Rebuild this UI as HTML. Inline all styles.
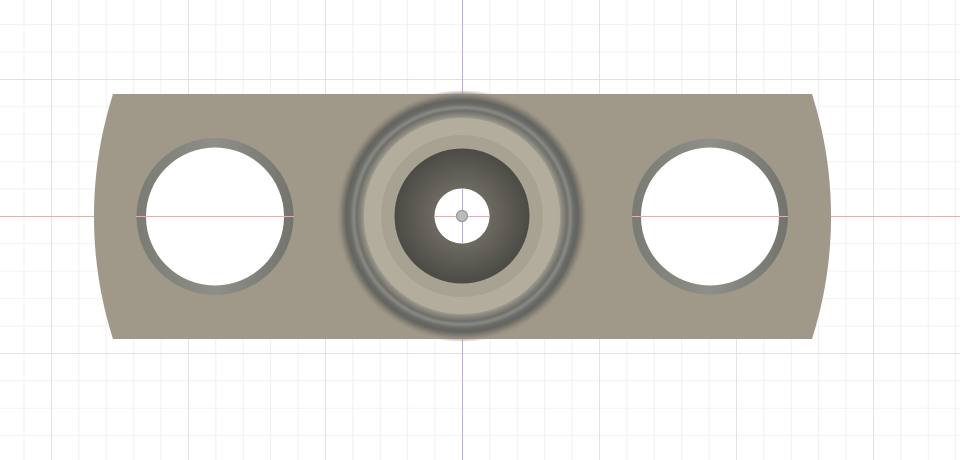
<!DOCTYPE html>
<html><head><meta charset="utf-8"><style>
html,body{margin:0;padding:0;background:#fff;width:960px;height:460px;overflow:hidden}
</style></head><body>
<svg width="960" height="460" viewBox="0 0 960 460" xmlns="http://www.w3.org/2000/svg">
<defs>
<pattern id="minor" patternUnits="userSpaceOnUse" x="23.6" y="24.2" width="27.4" height="27.4">
<path d="M0 0H27.4M0 0V27.4" stroke="#ededf1" stroke-width="1.6" fill="none"/>
</pattern>
<pattern id="major" patternUnits="userSpaceOnUse" x="51" y="79" width="137" height="137">
<path d="M0 0H137M0 0V137" stroke="#dadae0" stroke-width="1.4" fill="none"/>
</pattern>
<linearGradient id="holeL" x1="0" x2="1">
<stop offset="0" stop-color="#7a7b75"/><stop offset="0.5" stop-color="#8f8f8a"/><stop offset="1" stop-color="#73746e"/>
</linearGradient>
<radialGradient id="ring" cx="462" cy="216" r="126" gradientUnits="userSpaceOnUse">
<stop offset="0.77" stop-color="#a9a494"/>
<stop offset="0.80" stop-color="#8a877e"/>
<stop offset="0.835" stop-color="#6e6f6a"/>
<stop offset="0.86" stop-color="#8a8a85"/>
<stop offset="0.89" stop-color="#6a6b66"/>
<stop offset="0.92" stop-color="#63645f"/>
<stop offset="0.96" stop-color="#8a8478"/>
<stop offset="1" stop-color="#a09888" stop-opacity="0"/>
</radialGradient>
<radialGradient id="cone" cx="462" cy="216" r="68" gradientUnits="userSpaceOnUse">
<stop offset="0.4" stop-color="#6d6a62"/>
<stop offset="1" stop-color="#4c4a45"/>
</radialGradient>
</defs>
<rect width="960" height="460" fill="#fff"/>
<rect width="960" height="460" fill="url(#minor)"/>
<rect width="960" height="460" fill="url(#major)"/>
<line x1="0" y1="216.5" x2="960" y2="216.5" stroke="#f0a8a8" stroke-width="1"/>
<line x1="462.5" y1="0" x2="462.5" y2="460" stroke="#b0b0f0" stroke-width="1"/>
<path d="M113 94 H812 A404 404 0 0 1 812 339 H113 A404 404 0 0 1 113 94 Z" fill="#a09888"/>
<circle cx="215" cy="216.5" r="78.5" fill="url(#holeL)"/>
<circle cx="215" cy="216.5" r="69" fill="#fff"/>
<circle cx="710" cy="216.5" r="78" fill="url(#holeL)"/>
<circle cx="710" cy="216.5" r="69" fill="#fff"/>
<line x1="136" y1="216.5" x2="294" y2="216.5" stroke="#f0a8a8" stroke-width="1"/>
<line x1="632" y1="216.5" x2="788" y2="216.5" stroke="#f0a8a8" stroke-width="1"/>
<circle cx="462" cy="216" r="126" fill="url(#ring)"/>
<circle cx="462" cy="216" r="98" fill="#b3ad9d"/>
<circle cx="462" cy="216" r="81" fill="#a7a292"/>
<circle cx="462" cy="216" r="67.5" fill="url(#cone)"/>
<circle cx="462" cy="216" r="27.5" fill="#fff"/>
<line x1="434" y1="216.5" x2="490" y2="216.5" stroke="#f0a8a8" stroke-width="1"/>
<line x1="462.5" y1="188" x2="462.5" y2="244" stroke="#b0b0f0" stroke-width="1"/>
<circle cx="462" cy="216" r="5.5" fill="#bbbbbb" stroke="#999" stroke-width="1.2"/>
</svg>
</body></html>
